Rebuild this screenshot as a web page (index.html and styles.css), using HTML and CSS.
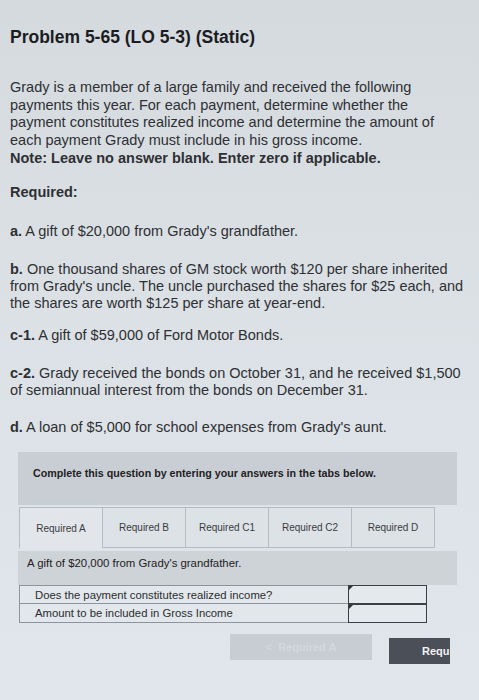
FILE: index.html
```html
<!DOCTYPE html>
<html>
<head>
<meta charset="utf-8">
<link rel="stylesheet" href="styles.css">
</head>
<body>
<div class="page">
  <h1 class="title">Problem 5-65 (LO 5-3) (Static)</h1>
  <p class="intro">Grady is a member of a large family and received the following payments this year. For each payment, determine whether the payment constitutes realized income and determine the amount of each payment Grady must include in his gross income.<br><b>Note: Leave no answer blank. Enter zero if applicable.</b></p>
  <p class="req"><b>Required:</b></p>
  <p class="item gap-a"><b>a.</b> A gift of $20,000 from Grady's grandfather.</p>
  <p class="item gap-b"><b>b.</b> One thousand shares of GM stock worth $120 per share inherited from Grady's uncle. The uncle purchased the shares for $25 each, and the shares are worth $125 per share at year-end.</p>
  <p class="item gap-c1"><b>c-1.</b> A gift of $59,000 of Ford Motor Bonds.</p>
  <p class="item gap-c2"><b>c-2.</b> Grady received the bonds on October 31, and he received $1,500 of semiannual interest from the bonds on December 31.</p>
  <p class="item gap-d"><b>d.</b> A loan of $5,000 for school expenses from Grady's aunt.</p>

  <div class="widget">
    <div class="banner">Complete this question by entering your answers in the tabs below.</div>
    <div class="tabs">
      <div class="tab active">Required A</div>
      <div class="tab">Required B</div>
      <div class="tab">Required C1</div>
      <div class="tab">Required C2</div>
      <div class="tab">Required D</div>
    </div>
    <div class="prompt">A gift of $20,000 from Grady's grandfather.</div>
    <div class="grid">
      <div class="label">Does the payment constitutes realized income?</div>
      <div class="input"><span class="mark"></span></div>
      <div class="label second">Amount to be included in Gross Income</div>
      <div class="input second"><span class="mark"></span></div>
    </div>
    <div class="nav">
      <div class="btn prev">&lt;&nbsp;&nbsp;Required A</div>
      <div class="btn next">Required B &gt;</div>
    </div>
  </div>
</div>
</body>
</html>
```

FILE: styles.css
```css
html, body {
  margin: 0;
  padding: 0;
}
body {
  width: 479px;
  height: 700px;
  overflow: hidden;
  background: linear-gradient(180deg, #d5dadf 0%, #dce1e6 45%, #e0e6eb 100%);
  font-family: "Liberation Sans", Arial, sans-serif;
  color: #2e3033;
}
.page {
  padding: 28px 0 0 10px;
}
.title {
  margin: 0;
  font-size: 17.5px;
  line-height: 18px;
  font-weight: bold;
  color: #1c1d1f;
}
.intro {
  margin: 33px 0 0 0;
  width: 448px;
  font-size: 14.5px;
  line-height: 17.7px;
}
.req {
  margin: 16px 0 0 0;
  font-size: 14.5px;
  line-height: 17.7px;
}
.item {
  margin: 0;
  width: 462px;
  font-size: 14.5px;
  line-height: 17px;
}
.gap-a {
  margin-top: 22px;
}
.gap-b {
  margin-top: 21px;
}
.gap-c1 {
  margin-top: 15px;
}
.gap-c2 {
  margin-top: 21px;
}
.gap-d {
  margin-top: 20px;
}
.widget {
  margin: 16px 0 0 8px;
  width: 439px;
}
.banner {
  background: #c9ced4;
  height: 53px;
  box-sizing: border-box;
  padding: 15px 0 0 15px;
  font-size: 10.7px;
  font-weight: bold;
  color: #222;
}
.tabs {
  display: flex;
  margin: 2px 0 0 1px;
  width: 416px;
}
.tab {
  flex: 1;
  height: 41px;
  box-sizing: border-box;
  border: 1px solid #b5bbc1;
  border-left: none;
  display: flex;
  align-items: center;
  justify-content: center;
  font-size: 10px;
  color: #3a3c40;
  background: #dde2e7;
}
.tab.active {
  border-left: 1px solid #b5bbc1;
  border-bottom: none;
  background: #e2e6ea;
}
.prompt {
  margin-top: 3px;
  background: #ced3d8;
  height: 34px;
  box-sizing: border-box;
  padding: 6px 0 0 9px;
  font-size: 11.4px;
  color: #222;
}
.grid {
  display: grid;
  grid-template-columns: 329px 79px;
  margin-left: 1px;
  width: 408px;
}
.label {
  height: 19px;
  box-sizing: border-box;
  border: 1px solid #8e949a;
  border-right: none;
  padding: 2px 0 0 15px;
  font-size: 11.3px;
  line-height: 14px;
  color: #2b2d30;
  background: #e2e7eb;
}
.label.second {
  border-top: none;
}
.input {
  position: relative;
  height: 19px;
  box-sizing: border-box;
  border: 1.5px solid #3b3f44;
  background: #e4e9ed;
}
.input.second {
  border-top-width: 1px;
}
.mark {
  position: absolute;
  left: 0;
  top: 0;
  width: 0;
  height: 0;
  border-top: 4px solid #333;
  border-right: 4px solid transparent;
}
.nav {
  display: flex;
  margin-top: 11px;
  padding-left: 212px;
}
.btn {
  height: 26px;
  box-sizing: border-box;
  font-size: 11px;
  font-weight: bold;
  white-space: nowrap;
  overflow: hidden;
}
.prev {
  width: 142px;
  background: #c7cdd2;
  color: #d3d9de;
  text-align: center;
  padding-top: 7px;
}
.next {
  width: 61px;
  margin: 4px 0 0 17px;
  background: #4b5058;
  color: #f2f3f4;
  padding: 7px 0 0 33px;
}
```
